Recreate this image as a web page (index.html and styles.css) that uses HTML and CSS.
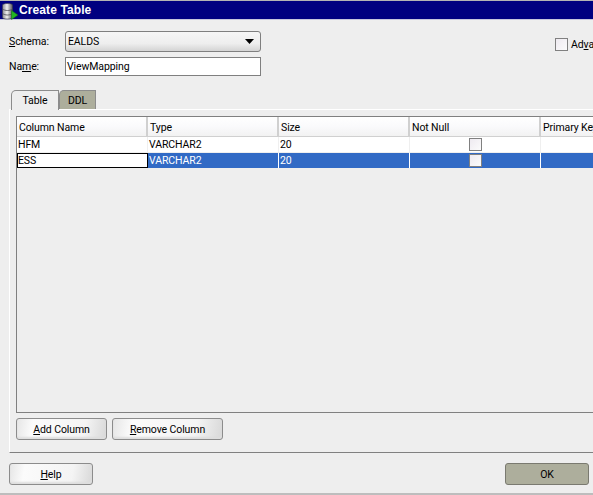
FILE: index.html
```html
<!DOCTYPE html>
<html lang="en">
<head>
<meta charset="utf-8">
<title>Create Table</title>
<link rel="stylesheet" href="styles.css">
</head>
<body>
<div class="dialog">
  <header class="titlebar">
    <svg class="app-icon" width="18" height="18" viewBox="0 0 18 18">
      <defs>
        <linearGradient id="can" x1="0" x2="1" y1="0" y2="0">
          <stop offset="0" stop-color="#8c8c94"/>
          <stop offset="0.45" stop-color="#f0f0f0"/>
          <stop offset="1" stop-color="#55555f"/>
        </linearGradient>
      </defs>
      <path d="M1.5 3C1.5 1 11.5 1 11.5 3V15.5C11.5 17.5 1.5 17.5 1.5 15.5Z" fill="url(#can)" stroke="#3a3a48" stroke-width="0.6"/>
      <path d="M1.5 7C4 9 9 9 11.5 7M1.5 11.5C4 13.5 9 13.5 11.5 11.5" fill="none" stroke="#4a4a55" stroke-width="0.8"/>
      <path d="M10.5 8.5L17 13L10.5 17.5Z" fill="#22b422" stroke="#0c6a0c" stroke-width="0.5"/>
    </svg>
    <span class="title-text">Create Table</span>
  </header>

  <div class="top-form">
    <div class="fields">
      <div class="field-row">
        <label class="field-label"><u>S</u>chema:</label>
        <div class="select">
          <span>EALDS</span>
          <svg class="caret" width="9" height="5" viewBox="0 0 9 5"><path d="M0 0H9L4.5 5Z" fill="#000"/></svg>
        </div>
      </div>
      <div class="field-row name-row">
        <label class="field-label">Na<u>m</u>e:</label>
        <div class="input">ViewMapping</div>
      </div>
    </div>
    <div class="advanced">
      <span class="checkbox"></span>
      <span class="adv-label">Ad<u>v</u>anced</span>
    </div>
  </div>

  <nav class="tabs">
    <div class="tab active">Table</div>
    <div class="tab inactive">DDL</div>
  </nav>

  <section class="panel">
    <div class="table">
      <div class="row head">
        <div class="cell">Column Name</div>
        <div class="cell">Type</div>
        <div class="cell">Size</div>
        <div class="cell">Not Null</div>
        <div class="cell">Primary Key</div>
      </div>
      <div class="row body-row">
        <div class="cell">HFM</div>
        <div class="cell">VARCHAR2</div>
        <div class="cell">20</div>
        <div class="cell center"><span class="checkbox"></span></div>
        <div class="cell"></div>
      </div>
      <div class="row body-row selected">
        <div class="cell editing">ESS</div>
        <div class="cell">VARCHAR2</div>
        <div class="cell">20</div>
        <div class="cell center"><span class="checkbox"></span></div>
        <div class="cell"></div>
      </div>
    </div>
    <div class="panel-actions">
      <button class="btn add"><u>A</u>dd Column</button>
      <button class="btn remove"><u>R</u>emove Column</button>
    </div>
  </section>

  <footer class="footer">
    <button class="btn wide"><u>H</u>elp</button>
    <button class="btn wide primary">OK</button>
  </footer>
</div>
</body>
</html>
```
FILE: styles.css
```css
* { box-sizing: border-box; }
html, body { margin: 0; padding: 0; height: 100%; overflow: hidden; }
body { background: #bdbdbd; font: 10.5px/13px Roboto, "Liberation Sans", Arial, sans-serif; letter-spacing: -0.1px; color: #000; }
u { text-underline-offset: 1px; }

.dialog { width: 593px; height: 493px; background: #eeeeee; overflow: hidden; display: flex; flex-direction: column; }

.titlebar { height: 20px; flex: none; background: #000080; border-top: 1px solid #b4b4b4; border-bottom: 1px solid #c6c6dc; display: flex; align-items: center; padding-left: 1px; }
.app-icon { flex: none; margin-top: 1px; }
.title-text { color: #fff; font: bold 12px/13px "Liberation Sans", Arial, sans-serif; letter-spacing: 0.1px; }

.top-form { flex: none; display: flex; padding: 11px 0 0 9px; height: 70px; }
.fields { width: 252px; flex: none; }
.field-row { display: flex; align-items: center; height: 21px; }
.name-row { margin-top: 5px; height: 18px; }
.field-label { width: 56px; flex: none; }
.select { width: 196px; height: 21px; border: 1px solid #7f7f7f; border-radius: 3px; background: linear-gradient(#f6f6f6, #eeeeee 60%, #d4d4d4); display: flex; align-items: center; justify-content: space-between; padding: 0 3px 0 2px; }
.caret { margin-right: 3px; }
.input { width: 196px; height: 19px; border: 1px solid #7f7f7f; background: #fff; padding: 2px 0 0 1px; }

.advanced { flex: none; display: flex; align-items: flex-start; margin: 7px 0 0 294px; white-space: nowrap; }
.advanced .adv-label { margin-left: 3px; }
.checkbox { display: block; width: 13px; height: 13px; border: 1px solid #808080; background: linear-gradient(135deg, #eeeaf0, #fbfbfb); flex: none; }

.tabs { flex: none; display: flex; height: 19px; padding-left: 11px; position: relative; z-index: 1; }
.tab { height: 19px; text-align: center; padding-top: 3px; border: 1px solid #8c8c8c; border-bottom: 0; border-top-left-radius: 5px 5px; }
.tab.active { width: 48px; background: #eeeeee; height: 20px; }
.tab.inactive { width: 37px; background: #adae9c; }

.panel { flex: none; height: 344px; margin-left: 9px; border-top: 1px solid #fff; border-left: 1px solid #fff; border-bottom: 1px solid #808080; padding: 6px 0 0 6px; overflow: hidden; }
.table { width: 578px; height: 297px; border: 1px solid #808080; border-right: 0; overflow: hidden; }
.row { display: grid; grid-template-columns: 131px 131px 131px 131px 131px; }
.cell { white-space: nowrap; overflow: hidden; padding-left: 1px; }
.row.head { height: 20px; background: linear-gradient(#ffffff, #fafafc 50%, #f2f2f2); border-bottom: 1px solid #d0d0d0; }
.row.head .cell { border-right: 2px solid #d0d0d0; padding: 4px 0 0 2px; }
.body-row { height: 16px; background: #fff; border-bottom: 1px solid #efefef; }
.body-row .cell { border-right: 1px solid #efefef; padding-top: 1px; }
.selected { background: #316ac5; color: #fff; border-bottom: 0; height: 15px; }
.selected .cell { border-right: 1px solid #fff; }
.selected .editing { background: #fff; color: #000; border: 1px solid #000; height: 15px; padding: 1px 0 0 0; line-height: 12px; }
.center { display: flex; justify-content: center; padding: 1px 0 0 0; }

.panel-actions { display: flex; gap: 5px; margin-top: 5px; }
.btn { font: inherit; letter-spacing: inherit; color: #000; height: 22px; padding: 0; border: 1px solid #8c8c8c; border-radius: 3px; background: linear-gradient(100deg, #e6e6e6, #fbfbfb 18%, #f4f4f4 75%, #d8d8d8); box-shadow: inset 0 -2px 2px #dedede; }
.add { width: 91px; }
.remove { width: 111px; }

.footer { flex: none; display: flex; justify-content: space-between; padding: 10px 4px 0 9px; }
.wide { width: 84px; }
.primary { background: #adae9c; box-shadow: none; border-color: #7a7a70; }
```
